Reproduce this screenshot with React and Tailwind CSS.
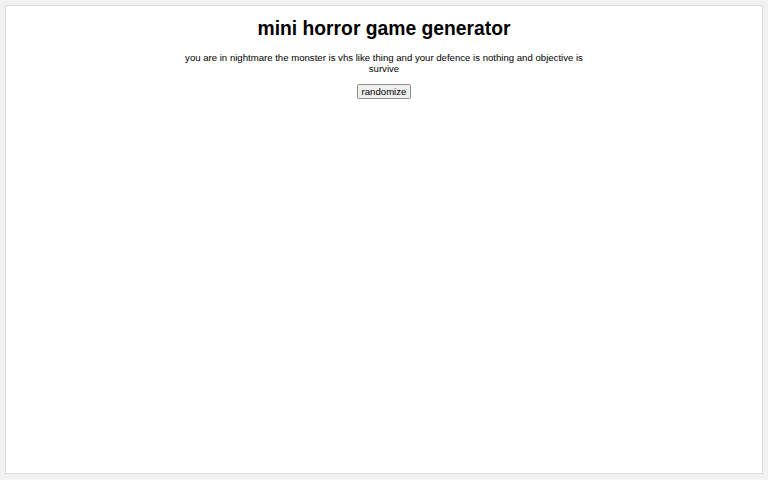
export default function App() {
  return (
    <div className="w-[768px] h-[480px] bg-[#f2f2f2] p-[5px] pb-[6px]" style={{ fontFamily: '"Liberation Sans", Arial, sans-serif' }}>
      <div className="h-full bg-white border border-[#dcdcdc] flex flex-col items-center">
        <h1 className="mt-[11px] text-[19.3px] leading-[23px] font-bold text-black">mini horror game generator</h1>
        <p className="mt-[12px] max-w-[400px] text-center text-[9.6px] leading-[11px] text-black">
          you are in nightmare the monster is vhs like thing and your defence is nothing and objective is survive
        </p>
        <button className="mt-[10px] px-[4px] h-[15px] text-[9.6px] leading-[12px] text-black bg-[#efefef] border border-[#8f8f8f] rounded-[2px]">
          randomize
        </button>
      </div>
    </div>
  );
}
